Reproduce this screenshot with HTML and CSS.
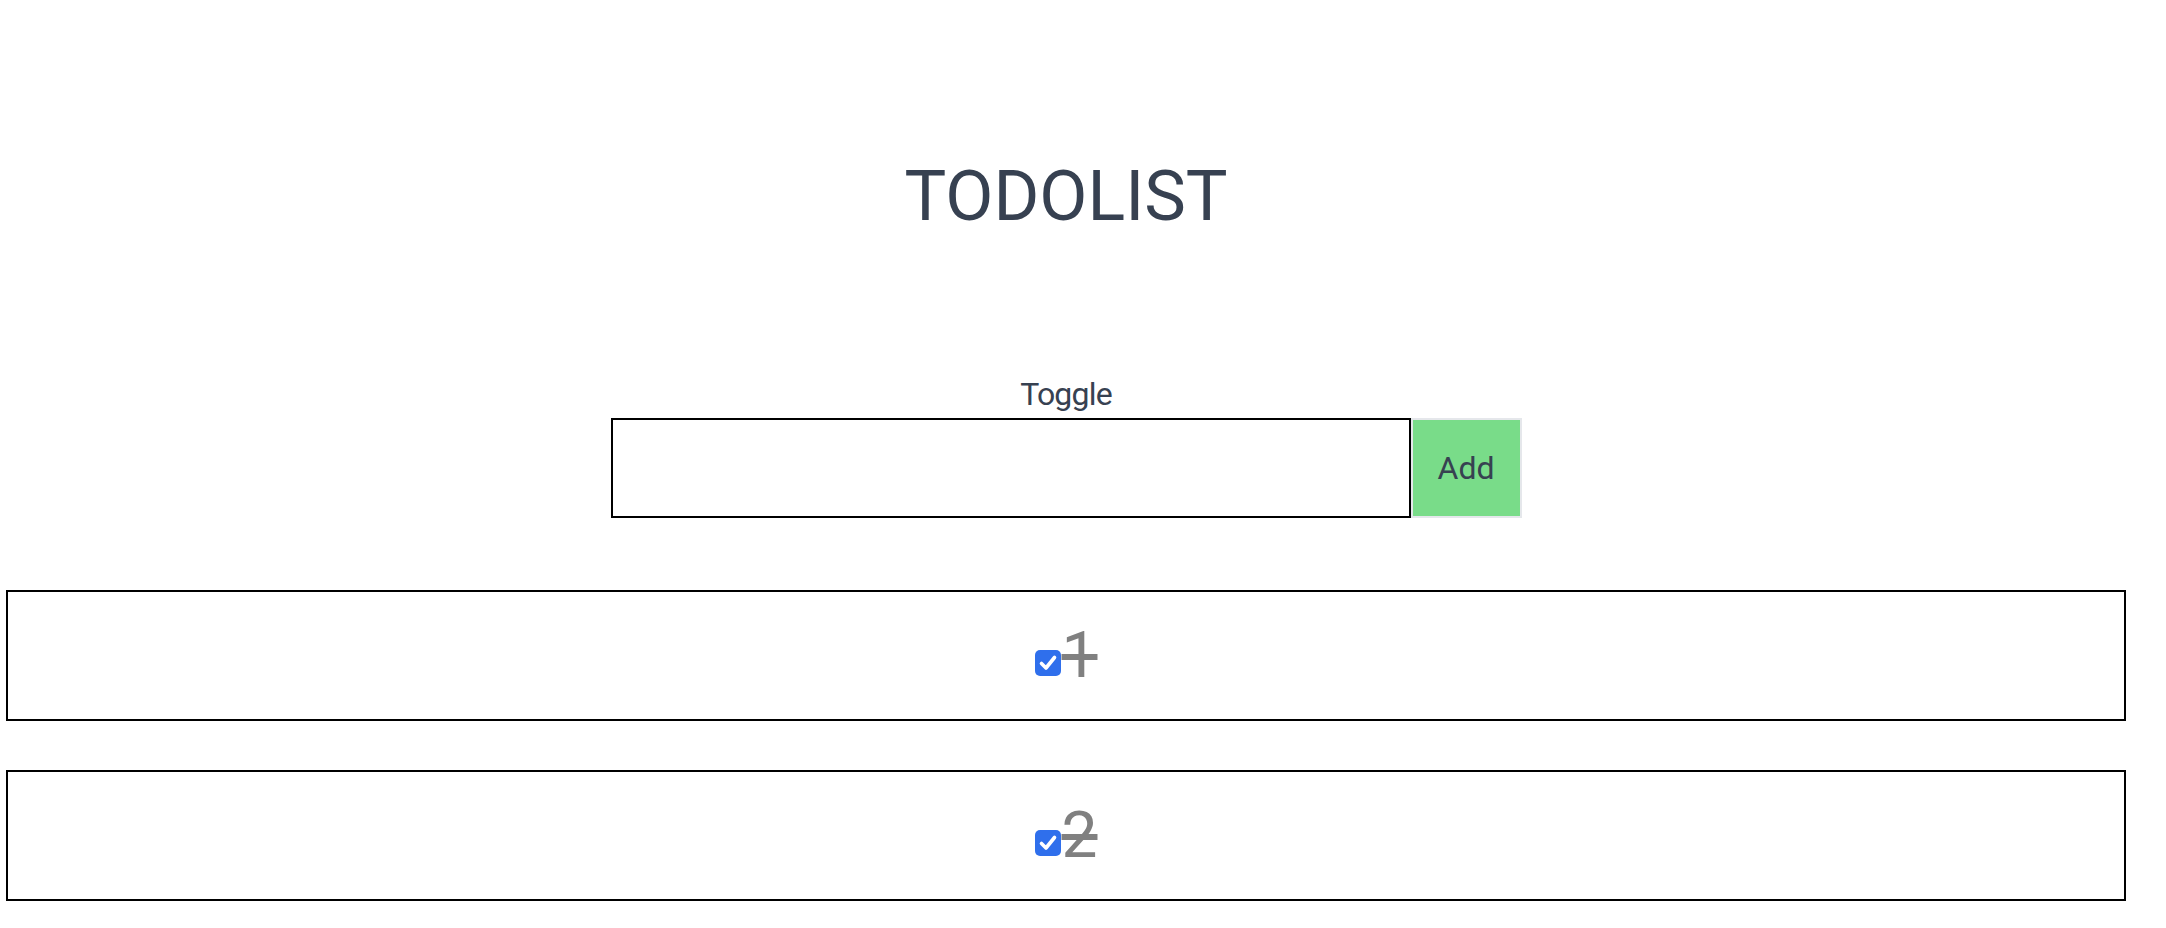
FILE: index.html
```html
<!DOCTYPE html>
<html lang="en">
<head>
<meta charset="utf-8">
<title>TODOLIST</title>
<link rel="stylesheet" href="styles.css">
</head>
<body>
<main class="app">
  <h1 class="title">TODOLIST</h1>
  <form class="add-form">
    <label class="toggle-label" for="new-todo">Toggle</label>
    <div class="add-row">
      <input id="new-todo" class="add-input" type="text">
      <button type="button" class="add-btn">Add</button>
    </div>
  </form>
  <ul class="todo-list">
    <li class="todo-item"><input class="todo-check" type="checkbox" checked><span class="todo-text done">1</span></li>
    <li class="todo-item"><input class="todo-check" type="checkbox" checked><span class="todo-text done">2</span></li>
  </ul>
</main>
</body>
</html>
```
FILE: styles.css
```css
html, body {
  margin: 0;
  padding: 0;
  background: #ffffff;
}

body {
  font-family: Roboto, "Liberation Sans", sans-serif;
  color: #374151;
}

.app {
  padding: 155px 40px 0 6px;
  text-align: center;
}

.title {
  margin: 0;
  font-size: 70px;
  font-weight: 400;
  line-height: 82px;
  color: #374151;
}

.add-form {
  margin-top: 137px;
  display: flex;
  flex-direction: column;
  align-items: center;
}

.toggle-label {
  display: block;
  font-size: 32px;
  line-height: 40px;
  letter-spacing: -0.8px;
  color: #374151;
}

.add-row {
  display: flex;
  margin-top: 4px;
}

.add-input {
  box-sizing: border-box;
  width: 800px;
  height: 100px;
  margin: 0;
  border: 2px solid #000000;
  background: #ffffff;
  font-size: 32px;
  padding: 0 12px;
  outline: none;
}

.add-btn {
  box-sizing: border-box;
  width: 111px;
  height: 100px;
  margin: 0;
  border: 2px solid #e5e7eb;
  background: #79dc89;
  color: #374151;
  font-family: Roboto, "Liberation Sans", sans-serif;
  font-size: 32px;
  padding: 0;
}

.todo-list {
  list-style: none;
  margin: 72px 0 0 0;
  padding: 0;
  display: flex;
  flex-direction: column;
  gap: 49px;
}

.todo-item {
  box-sizing: border-box;
  height: 131px;
  border: 2px solid #000000;
  padding: 22px 0;
  font-size: 64px;
  line-height: 83px;
  text-align: center;
}

.todo-check {
  appearance: none;
  -webkit-appearance: none;
  width: 26px;
  height: 26px;
  margin: 0 1px 1px 0;
  border-radius: 5px;
  vertical-align: baseline;
  background: #2f6fec url("data:image/svg+xml,%3Csvg xmlns='http://www.w3.org/2000/svg' viewBox='0 0 26 26'%3E%3Cpolyline points='6.5,13.5 11,18 19.5,7.5' fill='none' stroke='white' stroke-width='3.6' stroke-linecap='round' stroke-linejoin='round'/%3E%3C/svg%3E") center / 26px 26px no-repeat;
}

.todo-text {
  color: #808080;
}

.todo-text.done {
  text-decoration: line-through;
}
```
